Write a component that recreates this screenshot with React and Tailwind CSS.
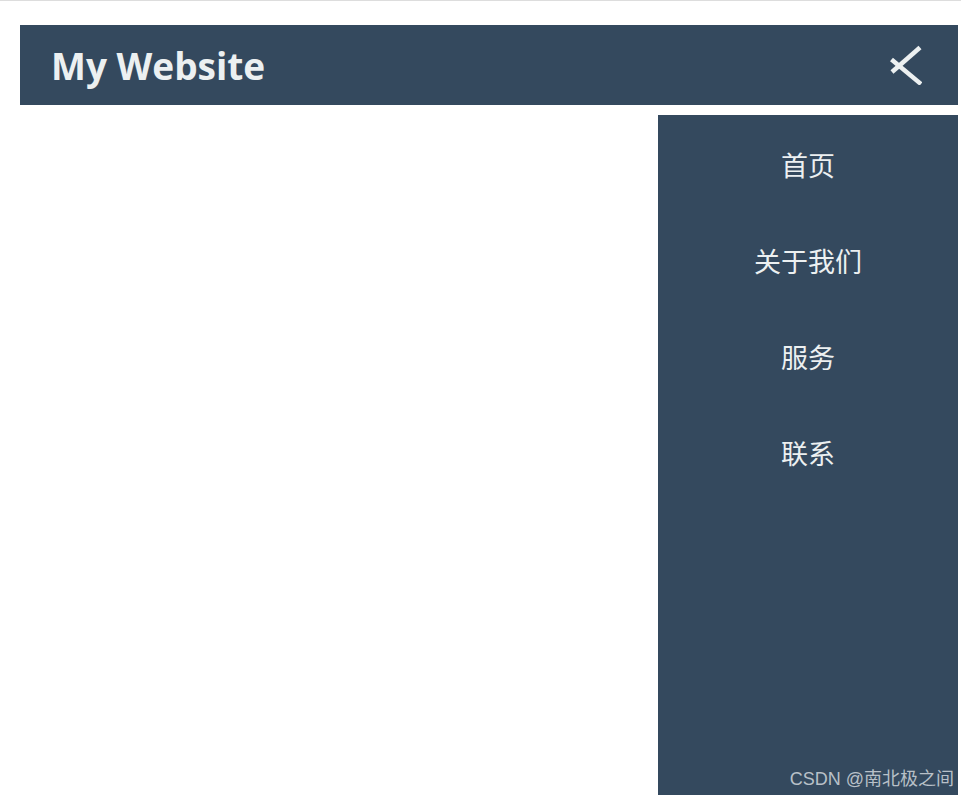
import React from "react";

export default function App() {
  return (
    <div className="relative w-[961px] h-[795px] overflow-hidden bg-white">
      <div className="h-px bg-[#dddddd]" />
      <div className="pt-[24px] pl-[20px]">
        <header className="w-[938px] h-[80px] bg-[#34495e] flex items-center justify-between pl-[31px] pr-[36px]">
          <h1 className="text-[#ecf0f1] font-bold text-[37px] leading-none font-['Open_Sans','Noto_Sans',sans-serif]">
            My Website
          </h1>
          <svg width="32" height="40" viewBox="0 0 32 40" className="block shrink-0">
            <line x1="30" y1="2.5" x2="2" y2="27" stroke="#ecf0f1" strokeWidth="4.5" />
            <line x1="1.5" y1="14.5" x2="31" y2="39" stroke="#ecf0f1" strokeWidth="4.5" />
          </svg>
        </header>
        <div className="flex justify-end w-[938px] mt-[10px]">
          <nav className="w-[300px] h-[680px] bg-[#34495e] pt-[2px]">
            <ul className="font-['Noto_Sans_CJK_SC',sans-serif] text-[#ecf0f1] text-[27px]">
              {["首页", "关于我们", "服务", "联系"].map((t) => (
                <li key={t} className="h-[96px] flex items-center justify-center">
                  {t}
                </li>
              ))}
            </ul>
          </nav>
        </div>
      </div>
      <div className="absolute right-[7px] bottom-[7px] text-[18px] leading-none text-[#b8c0c8] font-['Liberation_Sans','Noto_Sans_CJK_SC',sans-serif]">
        CSDN @南北极之间
      </div>
    </div>
  );
}
